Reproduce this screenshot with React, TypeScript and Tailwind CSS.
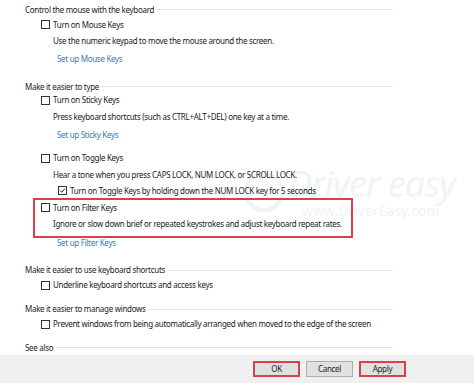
import React from 'react';

function Header({ text, mt }: { text: string; mt: string }) {
  return (
    <div className={`flex items-center h-[14px] w-[368px] ml-[25px] ${mt}`}>
      <span className="whitespace-nowrap">{text}</span>
      <div className="flex-1 h-px bg-[#e2e2e2] ml-[3px]" />
    </div>
  );
}

function Check({ label, checked, ml, mt }: { label: string; checked?: boolean; ml: string; mt: string }) {
  return (
    <div className={`flex items-center h-[14px] ${ml} ${mt}`}>
      <span className="w-[9px] h-[9px] border border-[#333] bg-white flex items-center justify-center mr-[3px]">
        {checked && (
          <svg width="7" height="7" viewBox="0 0 7 7">
            <path d="M1 3.5 L2.8 5.3 L6 1.5" fill="none" stroke="#222" strokeWidth="1" />
          </svg>
        )}
      </span>
      <span className="whitespace-nowrap">{label}</span>
    </div>
  );
}

function Line({ text, ml, mt, link }: { text: string; ml: string; mt: string; link?: boolean }) {
  return (
    <div className={`flex items-center h-[14px] whitespace-nowrap ${ml} ${mt} ${link ? 'text-[#3b78b8]' : ''}`}>
      {text}
    </div>
  );
}

export default function App() {
  return (
    <div className="w-[474px] h-[383px] bg-white relative overflow-hidden text-[#1b1b1b] text-[8px] tracking-[-0.3px]" style={{ fontFamily: '"Noto Sans", "Open Sans", sans-serif' }}>
      {/* watermark */}
      <div className="absolute left-[242px] top-[166px] pointer-events-none text-[#eff4f7] flex items-center tracking-normal">
        <svg width="44" height="44" viewBox="0 0 44 44" className="mr-[2px]">
          <circle cx="22" cy="22" r="18" fill="none" stroke="#eff4f7" strokeWidth="4" />
        </svg>
        <div className="flex flex-col leading-none">
          <span className="italic text-[36px] tracking-tight">Driver easy</span>
          <span className="text-[14px] mt-[2px] ml-[14px]">www.DriverEasy.com</span>
        </div>
      </div>

      <div className="h-[355px] flex flex-col relative">
        <Header text="Control the mouse with the keyboard" mt="mt-[3px]" />
        <Check label="Turn on Mouse Keys" ml="ml-[41px]" mt="mt-[1px]" />
        <Line text="Use the numeric keypad to move the mouse around the screen." ml="ml-[53px]" mt="mt-[2px]" />
        <Line text="Set up Mouse Keys" ml="ml-[57px]" mt="mt-[4px]" link />

        <Header text="Make it easier to type" mt="mt-[14px]" />
        <Check label="Turn on Sticky Keys" ml="ml-[41px]" mt="mt-0" />
        <Line text="Press keyboard shortcuts (such as CTRL+ALT+DEL) one key at a time." ml="ml-[53px]" mt="mt-[3px]" />
        <Line text="Set up Sticky Keys" ml="ml-[57px]" mt="mt-[4px]" link />
        <Check label="Turn on Toggle Keys" ml="ml-[41px]" mt="mt-[9px]" />
        <Line text="Hear a tone when you press CAPS LOCK, NUM LOCK, or SCROLL LOCK." ml="ml-[53px]" mt="mt-[3px]" />
        <Check label="Turn on Toggle Keys by holding down the NUM LOCK key for 5 seconds" checked ml="ml-[58px]" mt="mt-[2px]" />
        <Check label="Turn on Filter Keys" ml="ml-[41px]" mt="mt-[3px]" />
        <Line text="Ignore or slow down brief or repeated keystrokes and adjust keyboard repeat rates." ml="ml-[53px]" mt="mt-[2px]" />
        <Line text="Set up Filter Keys" ml="ml-[57px]" mt="mt-[5px]" link />

        <Header text="Make it easier to use keyboard shortcuts" mt="mt-[14px]" />
        <Check label="Underline keyboard shortcuts and access keys" ml="ml-[41px]" mt="mt-[1px]" />

        <Header text="Make it easier to manage windows" mt="mt-[10px]" />
        <Check label="Prevent windows from being automatically arranged when moved to the edge of the screen" ml="ml-[41px]" mt="mt-[1px]" />

        <Header text="See also" mt="mt-[10px]" />
      </div>

      <div className="h-[28px] bg-[#f0f0f0] flex items-center pl-[253px] gap-[6px] relative">
        <button className="w-[47px] h-[16px] bg-[#e1e1e1] border-2 border-[#d8414a] flex items-center justify-center">OK</button>
        <button className="w-[47px] h-[16px] bg-[#e1e1e1] border border-[#adadad] flex items-center justify-center">Cancel</button>
        <button className="w-[47px] h-[16px] bg-[#e1e1e1] border-2 border-[#d8414a] flex items-center justify-center">Apply</button>
      </div>

      {/* red annotation */}
      <div className="absolute left-[33px] top-[198px] w-[320px] h-[40px] border-2 border-[#d8414a]" />
    </div>
  );
}
